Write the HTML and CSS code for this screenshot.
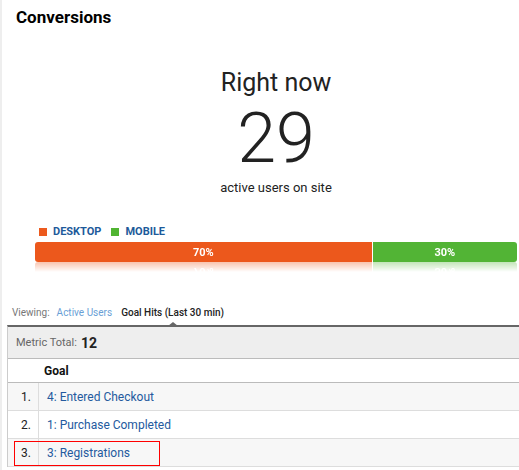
FILE: index.html
```html
<!DOCTYPE html>
<html>
<head>
<meta charset="utf-8">
<link rel="stylesheet" href="styles.css">
</head>
<body>
<div class="page">
  <h1 class="title">Conversions</h1>
  <div class="summary">
    <div class="now">Right now</div>
    <div class="count">29</div>
    <div class="caption">active users on site</div>
    <div class="legend">
      <span class="key"><span class="swatch swatch-desktop"></span>DESKTOP</span>
      <span class="key"><span class="swatch swatch-mobile"></span>MOBILE</span>
    </div>
    <div class="bar">
      <div class="seg seg-desktop" style="flex: 70">70%</div>
      <div class="seg seg-mobile" style="flex: 30">30%</div>
    </div>
  </div>
  <div class="viewing">
    <span class="view-label">Viewing:</span>
    <span class="view-link">Active Users</span>
    <span class="view-active">Goal Hits (Last 30 min)</span>
  </div>
  <div class="table">
    <div class="metric">Metric Total: <b class="metric-value">12</b></div>
    <div class="row head">
      <div class="num"></div>
      <div class="goal">Goal</div>
    </div>
    <div class="row odd">
      <div class="num">1.</div>
      <div class="goal link">4: Entered Checkout</div>
    </div>
    <div class="row">
      <div class="num">2.</div>
      <div class="goal link">1: Purchase Completed</div>
    </div>
    <div class="row odd marked">
      <div class="num">3.</div>
      <div class="goal link">3: Registrations</div>
      <div class="highlight"></div>
    </div>
  </div>
</div>
</body>
</html>
```
FILE: styles.css
```css
html, body {
  margin: 0;
  padding: 0;
  background: #fff;
  overflow: hidden;
}
body {
  font-family: Roboto, "Liberation Sans", Arial, sans-serif;
  color: #222;
  width: 519px;
  height: 470px;
}
.page {
  border-left: 2px solid #eeeeee;
  height: 470px;
  box-sizing: border-box;
}
.title {
  margin: 0;
  padding: 7px 0 0 14px;
  font-size: 17px;
  line-height: 20px;
  font-weight: 700;
  color: #000;
}
.summary {
  padding: 0 2px 0 33px;
  text-align: center;
}
.now {
  margin-top: 41px;
  font-size: 25px;
  line-height: 30px;
  color: #222;
}
.count {
  margin-top: 5px;
  font-size: 70px;
  line-height: 70px;
  font-weight: 300;
  color: #222;
}
.caption {
  margin-top: 7px;
  font-size: 13px;
  line-height: 16px;
  color: #222;
}
.legend {
  margin-top: 30px;
  padding-left: 4px;
  display: flex;
  gap: 10px;
  font-size: 11px;
  line-height: 12px;
  font-weight: 700;
  color: #1d5a9a;
  text-align: left;
}
.key {
  display: flex;
  align-items: center;
}
.swatch {
  width: 8px;
  height: 8px;
  margin-right: 6px;
}
.swatch-desktop { background: #ec5a1e; }
.swatch-mobile { background: #50b432; }
.bar {
  margin-top: 4px;
  height: 20px;
  display: flex;
  gap: 1px;
  border-radius: 3px;
  overflow: hidden;
  -webkit-box-reflect: below 0 linear-gradient(to bottom, rgba(255,255,255,0) 50%, rgba(255,255,255,0.35) 100%);
}
.seg {
  display: flex;
  align-items: center;
  justify-content: center;
  color: #fff;
  font-size: 11px;
  font-weight: 700;
}
.seg-desktop { background: #ec581c; }
.seg-mobile { background: #52b435; }
.viewing {
  margin-top: 45px;
  padding-left: 10px;
  font-size: 10px;
  line-height: 12px;
  display: flex;
  gap: 7px;
}
.view-label { color: #777; }
.view-link { color: #6a9fd6; }
.view-active {
  margin-left: 2px;
  color: #222;
  font-weight: 500;
  position: relative;
}
.view-active::after {
  content: "";
  position: absolute;
  left: 50%;
  top: 15px;
  transform: translateX(-50%);
  border-left: 5px solid transparent;
  border-right: 5px solid transparent;
  border-bottom: 4px solid #666;
}
.table {
  margin-top: 6px;
  margin-left: 5px;
  width: 530px;
  border-left: 1px solid #cccccc;
  border-top: 2px solid #666;
}
.metric {
  height: 31px;
  display: flex;
  align-items: center;
  padding-left: 8px;
  background: #eeeeee;
  border-bottom: 1px solid #bbbbbb;
  font-size: 11px;
  color: #666;
}
.metric-value {
  margin-left: 4px;
  font-size: 14px;
  font-weight: 700;
  color: #222;
}
.row {
  display: flex;
  height: 27px;
  border-bottom: 1px solid #dddddd;
  font-size: 12px;
  position: relative;
}
.row.head {
  height: 23px;
  border-bottom: 1px solid #bbbbbb;
  font-weight: 700;
}
.row.odd { background: #f7f7f7; }
.num {
  width: 31px;
  box-sizing: border-box;
  padding-right: 7px;
  text-align: right;
  border-right: 1px solid #dddddd;
  display: flex;
  align-items: center;
  justify-content: flex-end;
}
.row.head .num { border-right: none; }
.goal {
  padding-left: 8px;
  display: flex;
  align-items: center;
}
.row.head .goal { padding-left: 5px; color: #111; }
.link { color: #245a9e; }
.highlight {
  position: absolute;
  left: 6px;
  top: 2px;
  width: 146px;
  height: 25px;
  box-sizing: border-box;
  border: 1px solid #ff0000;
}
```
